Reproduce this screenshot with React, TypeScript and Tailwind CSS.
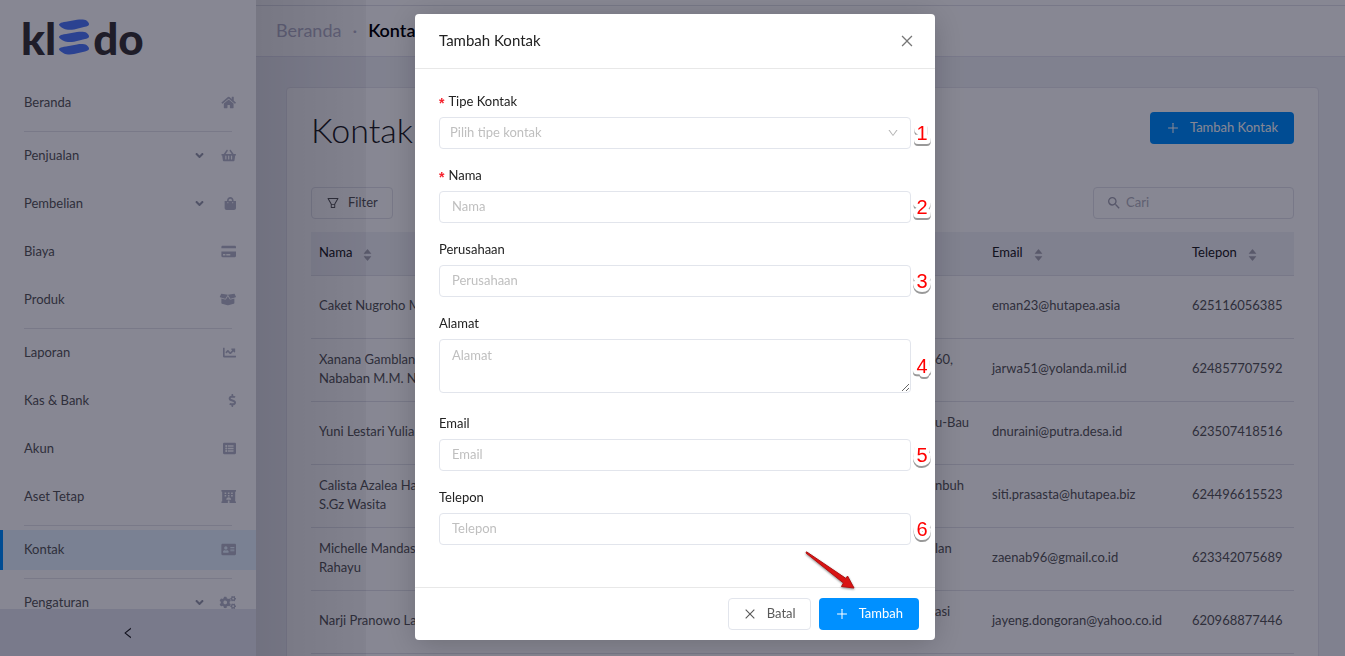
import type { ReactNode } from "react";
import type { IconType } from "react-icons";
import {
  FaAddressCard,
  FaAngleDown,
  FaBoxOpen,
  FaChartLine,
  FaCogs,
  FaCreditCard,
  FaDollarSign,
  FaHome,
  FaHotel,
  FaListAlt,
  FaShoppingBag,
  FaShoppingBasket,
} from "react-icons/fa";
import {
  AiFillCaretDown,
  AiFillCaretUp,
  AiOutlineClose,
  AiOutlineDown,
  AiOutlineFilter,
  AiOutlineLeft,
  AiOutlinePlus,
} from "react-icons/ai";
import { MdSearch } from "react-icons/md";

interface MenuItem {
  label: string;
  icon: IconType;
  submenu?: boolean;
  active?: boolean;
}

const menuGroups: MenuItem[][] = [
  [{ label: "Beranda", icon: FaHome }],
  [
    { label: "Penjualan", icon: FaShoppingBasket, submenu: true },
    { label: "Pembelian", icon: FaShoppingBag, submenu: true },
    { label: "Biaya", icon: FaCreditCard },
    { label: "Produk", icon: FaBoxOpen },
  ],
  [
    { label: "Laporan", icon: FaChartLine },
    { label: "Kas & Bank", icon: FaDollarSign },
    { label: "Akun", icon: FaListAlt },
    { label: "Aset Tetap", icon: FaHotel },
  ],
  [{ label: "Kontak", icon: FaAddressCard, active: true }],
  [{ label: "Pengaturan", icon: FaCogs, submenu: true }],
];

const contacts = [
  { name: ["Caket Nugroho M"], address: "", email: "eman23@hutapea.asia", phone: "625116056385" },
  { name: ["Xanana Gamblan", "Nababan M.M. N"], address: "60,", email: "jarwa51@yolanda.mil.id", phone: "624857707592" },
  { name: ["Yuni Lestari Yulia"], address: "u-Bau", email: "dnuraini@putra.desa.id", phone: "623507418516" },
  { name: ["Calista Azalea Ha", "S.Gz Wasita"], address: "nbuh", email: "siti.prasasta@hutapea.biz", phone: "624496615523" },
  { name: ["Michelle Mandas", "Rahayu"], address: "lan", email: "zaenab96@gmail.co.id", phone: "623342075689" },
  { name: ["Narji Pranowo La"], address: "asi", email: "jayeng.dongoran@yahoo.co.id", phone: "620968877446" },
];

const inputClass =
  "block h-8 w-full rounded border border-[#e2e5ec] bg-white px-3 pb-0.5 text-[#3c3c3c] outline-none placeholder:text-[#bfbfbf]";

function Logo() {
  return (
    <div className="flex h-[75px] items-center px-[21px] text-[44px] leading-none font-black text-[#3b3838]">
      <span>kl</span>
      <svg className="mx-[3px] h-[38px] w-[31px]" viewBox="0 0 31 38" fill="#527efb" aria-hidden="true">
        <path id="stripe" d="M1 4.5 C2 3.5 4 3.3 7 2.8 L18 .8 C22 .2 26 .5 27.5 1.5 C29 3 30.3 4 30 5.5 C29.5 7 28 7.3 26 7.8 L15 10.4 C12 11 7 11 5 9.8 C3 8.8 .5 7 0 6 C0 5.2 .5 4.8 1 4.5Z" />
        <use href="#stripe" y="12.3" />
        <use href="#stripe" y="24.6" />
      </svg>
      <span>do</span>
    </div>
  );
}

function Sidebar() {
  return (
    <aside className="flex w-64 shrink-0 flex-col bg-white">
      <Logo />
      <nav className="flex min-h-0 flex-1 flex-col overflow-hidden pt-1">
        {menuGroups.map((group, index) => (
          <div key={group[0].label}>
            {index > 0 && <hr className="mx-6 mt-1 border-[#e4e4ea]" />}
            {group.map(({ label, icon: Icon, submenu, active }) => (
              <div key={label} className="py-1">
                <a
                  href="#"
                  className={
                    active
                      ? "flex h-10 items-center border-l-3 border-[#0090ff] bg-[#e6f4ff] pr-5 pb-0.5 pl-[21px]"
                      : "flex h-10 items-center pr-5 pb-0.5 pl-6"
                  }
                >
                  <span className="flex-1">{label}</span>
                  {submenu && <FaAngleDown className="mr-2.5 size-[13px] text-[#9a9dac]" />}
                  <Icon className="h-[13px] w-5 text-[#b5b8c8]" preserveAspectRatio="xMaxYMid meet" />
                </a>
              </div>
            ))}
          </div>
        ))}
      </nav>
      <button type="button" aria-label="Ciutkan menu" className="flex h-[47px] shrink-0 items-center justify-center bg-[#e4e6f0]">
        <AiOutlineLeft className="text-sm text-[#222]" />
      </button>
    </aside>
  );
}

function SortHeader({ children }: { children: ReactNode }) {
  return (
    <th className="px-2 text-left font-normal text-[#222]">
      <div className="flex items-center gap-2.5">
        <span className="pb-0.5">{children}</span>
        <span className="flex flex-col pt-1 text-[11px] text-[#a8a8b2]">
          <AiFillCaretUp />
          <AiFillCaretDown className="-mt-1" />
        </span>
      </div>
    </th>
  );
}

function ContactTable() {
  return (
    <table className="mt-[13px] w-full table-fixed border-collapse">
      <colgroup>
        <col />
        <col className="w-[57px]" />
        <col className="w-[200px]" />
        <col className="w-[110px]" />
      </colgroup>
      <thead>
        <tr className="h-[43px] border-b border-[#e2e3ea] bg-[#f2f3f8]">
          <SortHeader>Nama</SortHeader>
          <th />
          <SortHeader>Email</SortHeader>
          <SortHeader>Telepon</SortHeader>
        </tr>
      </thead>
      <tbody>
        {contacts.map((contact) => (
          <tr key={contact.email} className="h-[63px] border-b border-[#e2e3ea] leading-[19px]">
            <td className="px-2 pb-0.5">
              {contact.name.map((line) => (
                <div key={line}>{line}</div>
              ))}
            </td>
            <td className="px-2 pt-[11px] align-top whitespace-nowrap">{contact.address}</td>
            <td className="px-2 pb-0.5">{contact.email}</td>
            <td className="px-2 pb-0.5">{contact.phone}</td>
          </tr>
        ))}
      </tbody>
    </table>
  );
}

function MainContent() {
  return (
    <main className="relative min-w-0 flex-1 bg-[#f2f3f8]">
      <div className="h-1.5 border-b border-[#e2e3ea] bg-white" />
      <header className="flex h-[51px] items-center border-b border-[#e4e4f0] bg-white px-5 pb-0.5 text-lg">
        <a href="#" className="text-[#b9b8cc]">Beranda</a>
        <span className="mx-[11px] text-[#b9b8cc]">·</span>
        <span className="font-semibold text-black">Kontak</span>
      </header>
      <div className="pt-[30px] pr-[26px] pl-[30px]">
        <section className="rounded-sm border border-[#e6e6ee] bg-white px-6 pt-6 pb-20">
          <div className="flex h-10 items-start justify-between">
            <h1 className="text-[34px] leading-9 font-light text-[#222]">Kontak</h1>
            <button type="button" className="flex h-8 items-center rounded bg-[#0090ff] px-4 text-white">
              <AiOutlinePlus className="mr-2.5 text-sm" />
              <span className="pb-0.5">Tambah Kontak</span>
            </button>
          </div>
          <div className="mt-[35px] flex items-center justify-between">
            <button type="button" className="flex h-8 items-center rounded border border-[#e2e3ea] px-3.5">
              <AiOutlineFilter className="mr-2 text-sm" />
              <span className="pb-0.5">Filter</span>
            </button>
            <label className="flex h-8 w-[201px] items-center rounded border border-[#e2e3ea] px-3">
              <MdSearch className="mr-1 shrink-0 text-base text-[#a5a5b2]" />
              <input type="search" aria-label="Cari" placeholder="Cari" className="w-full pb-0.5 outline-none placeholder:text-[#b4b4be]" />
            </label>
          </div>
          <ContactTable />
        </section>
      </div>
      <div className="absolute inset-y-0 left-0 w-[110px] bg-linear-to-r from-black/12 to-black/4" />
    </main>
  );
}

// Nomor langkah merah di samping setiap kolom isian
function StepNumber({ value }: { value: number }) {
  return (
    <svg className="pointer-events-none absolute top-1/2 left-full size-[22px] -translate-y-1/2 overflow-visible" viewBox="0 0 22 22" aria-hidden="true">
      <text
        x="11"
        y="18"
        textAnchor="middle"
        className="fill-[#ff0000] stroke-white stroke-8 font-['Liberation_Sans',sans-serif] text-xl drop-shadow-[0_2px_0_#999999] [paint-order:stroke] [stroke-linejoin:round]"
      >
        {value}
      </text>
    </svg>
  );
}

interface FieldProps {
  id: string;
  label: string;
  step: number;
  required?: boolean;
  children: ReactNode;
}

function Field({ id, label, step, required, children }: FieldProps) {
  return (
    <div className="mb-[18px]">
      <label htmlFor={id} className="mb-2 flex h-4 items-center text-[#222]">
        {required && <span className="mr-1 pt-1 font-['Liberation_Sans',sans-serif] text-sm leading-none font-bold text-[#f5222d]">*</span>}
        {label}
      </label>
      <div className="relative">
        {children}
        <StepNumber value={step} />
      </div>
    </div>
  );
}

function Arrow() {
  return (
    <svg className="pointer-events-none absolute right-[79px] bottom-full -mb-0.5 h-10 w-[52px] overflow-visible drop-shadow-[0_1px_1px_#888888]" viewBox="0 0 52 40" aria-hidden="true">
      <path d="M2.5 1.8 L42 28.5 L43.5 26 L50 38 L37.5 36.5 L39.5 33 L2 3 Z" fill="#d91414" stroke="#b31212" strokeWidth="1" strokeLinejoin="round" />
    </svg>
  );
}

function AddContactModal() {
  return (
    <div className="fixed inset-0 flex items-start justify-center overflow-hidden bg-[#000019]/47 pt-3.5 pl-[5px]">
      <div role="dialog" aria-labelledby="modal-title" className="w-[520px] rounded bg-white shadow-[0_4px_30px_rgba(0,0,0,0.2)]">
        <div className="flex h-[55px] items-center justify-between border-b border-[#e8e8e8] px-6">
          <h2 id="modal-title" className="pb-0.5 text-[15px] text-[#222]">Tambah Kontak</h2>
          <button type="button" aria-label="Tutup" className="-mr-1 text-base text-[#777]">
            <AiOutlineClose />
          </button>
        </div>
        <form>
          <div className="p-6">
            <Field id="tipe" label="Tipe Kontak" step={1} required>
              <select id="tipe" defaultValue="" className="block h-8 w-full appearance-none rounded border border-[#e2e5ec] bg-white px-2.5 pb-0.5 text-[#bfbfbf] outline-none">
                <option value="">Pilih tipe kontak</option>
              </select>
              <AiOutlineDown className="pointer-events-none absolute top-2.5 right-3 text-xs text-[#b5b5b5]" />
            </Field>
            <Field id="nama" label="Nama" step={2} required>
              <input id="nama" placeholder="Nama" className={inputClass} />
            </Field>
            <Field id="perusahaan" label="Perusahaan" step={3}>
              <input id="perusahaan" placeholder="Perusahaan" className={inputClass} />
            </Field>
            <Field id="alamat" label="Alamat" step={4}>
              <textarea
                id="alamat"
                placeholder="Alamat"
                className="mb-[22px] block h-[54px] w-full rounded border border-[#e2e5ec] bg-white px-3 py-[5px] outline-none placeholder:text-[#bfbfbf]"
              />
            </Field>
            <Field id="email" label="Email" step={5}>
              <input id="email" type="email" placeholder="Email" className={inputClass} />
            </Field>
            <Field id="telepon" label="Telepon" step={6}>
              <input id="telepon" type="tel" placeholder="Telepon" className={inputClass} />
            </Field>
          </div>
          <div className="relative flex justify-end gap-2 border-t border-[#e8e8e8] px-4 py-2.5">
            <button type="button" className="flex h-8 items-center rounded border border-[#e2e5ec] px-3.5">
              <AiOutlineClose className="mr-2.5 text-sm" />
              <span className="pb-0.5">Batal</span>
            </button>
            <button type="button" className="flex h-8 items-center rounded bg-[#0090ff] px-4 text-white">
              <AiOutlinePlus className="mr-2.5 text-sm" />
              <span className="pb-0.5">Tambah</span>
            </button>
            <Arrow />
          </div>
        </form>
      </div>
    </div>
  );
}

export default function App() {
  return (
    <div className="flex h-screen overflow-hidden font-['Lato',sans-serif] text-[13px] leading-5 text-[#595959]">
      <Sidebar />
      <MainContent />
      <AddContactModal />
    </div>
  );
}
